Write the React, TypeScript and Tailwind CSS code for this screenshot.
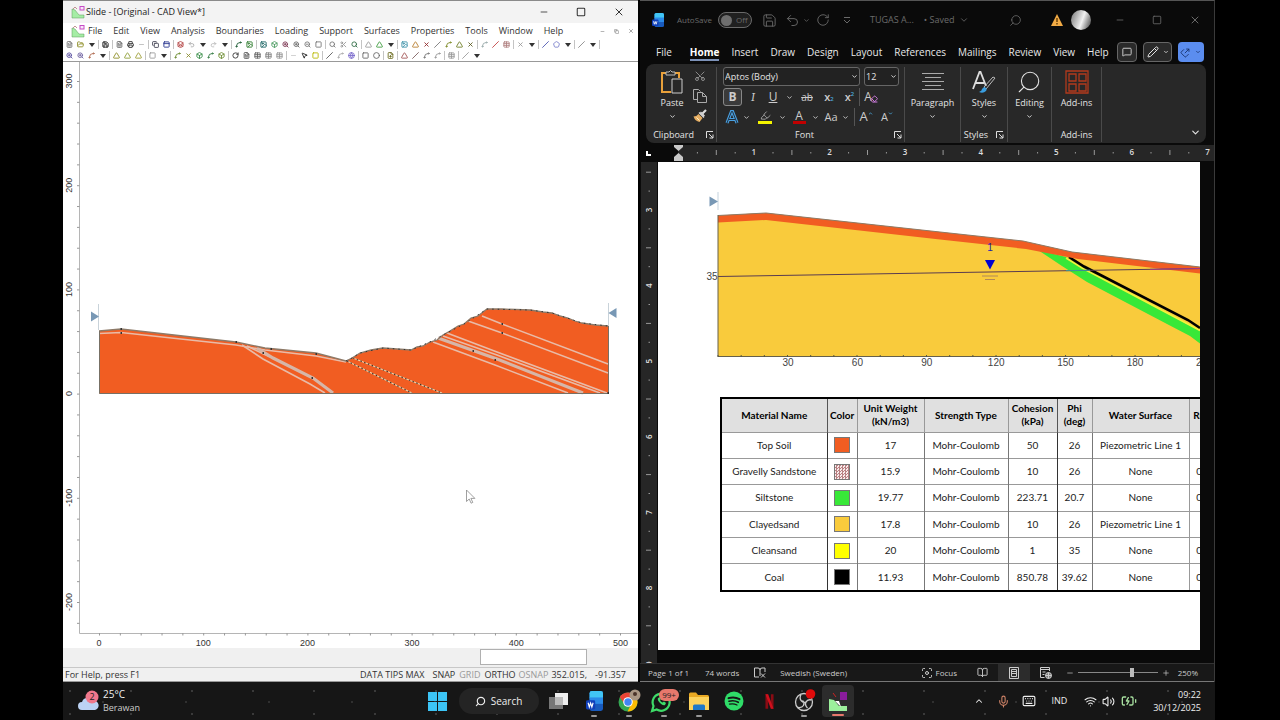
import type { ReactNode } from "react";
import {
  BatteryCharging,
  BookOpen,
  Box,
  ChevronDown,
  ChevronUp,
  Circle,
  Copy,
  Eraser,
  FilePlus,
  FileText,
  Focus,
  FolderOpen,
  Globe,
  Highlighter,
  Image as ImageIcon,
  Keyboard,
  Layers,
  MessageSquare,
  Mic,
  Minus,
  MousePointer2,
  PanelTop,
  Pencil,
  Pentagon,
  Plus,
  Printer,
  Redo2,
  RotateCw,
  Save,
  Scissors,
  Search,
  Share,
  Slash,
  Spline,
  Square,
  Table,
  Triangle,
  Undo2,
  Volume2,
  Wifi,
  X,
  ZoomIn,
  ZoomOut,
} from "lucide-react";

const slideMenu = [
  "File",
  "Edit",
  "View",
  "Analysis",
  "Boundaries",
  "Loading",
  "Support",
  "Surfaces",
  "Properties",
  "Tools",
  "Window",
  "Help",
];

const wordTabs = [
  "Home",
  "Insert",
  "Draw",
  "Design",
  "Layout",
  "References",
  "Mailings",
  "Review",
  "View",
  "Help",
];

// "|" is a separator, "v" a drop-down arrow
type ToolItem = "|" | "v" | [string, typeof Save, string];

const toolbarTop: ToolItem[] = [
  ["New", FileText, "#777"],
  ["Open", FolderOpen, "#8a8a20"],
  "v",
  "|",
  ["Save", Save, "#111"],
  "|",
  ["Preview", FileText, "#666"],
  ["Print", Printer, "#333"],
  ["Page", Minus, "#bbb"],
  "|",
  ["Copy", Copy, "#445"],
  ["Window", PanelTop, "#22308c"],
  "|",
  ["Layers", Layers, "#b03a3a"],
  ["Undo", Undo2, "#aaa"],
  "v",
  ["Redo", Redo2, "#bbb"],
  "v",
  "|",
  ["Filter", Spline, "#1d5c35"],
  ["Materials", ImageIcon, "#2b7a2b"],
  "|",
  ["Image", ImageIcon, "#15605f"],
  ["Region", Box, "#4a9a60"],
  ["Zoom all", ZoomIn, "#7a3450"],
  ["Zoom in", ZoomIn, "#666"],
  ["Zoom out", ZoomOut, "#777"],
  ["Zoom window", Square, "#777"],
  "|",
  ["Pan", Search, "#777"],
  ["Fit", Scissors, "#999"],
  ["Extent", Search, "#2f6b45"],
  "|",
  ["Slope", Triangle, "#999"],
  ["Ground", Triangle, "#3a9a3a"],
  "v",
  "|",
  ["Boundary", ImageIcon, "#3a90a8"],
  ["Edit boundary", Triangle, "#b57a2a"],
  ["Delete", X, "#912b2b"],
  ["Move", Slash, "#777"],
  ["Split", Spline, "#7f8c28"],
  ["Support", Triangle, "#6c7a20"],
  ["Remove support", X, "#5c5c20"],
  "|",
  ["Load", Spline, "#9aa"],
  ["Line load", Slash, "#c14040"],
  ["Tension", Table, "#b08080"],
  "|",
  ["Clear", X, "#999"],
  "v",
  "|",
  ["Line", Slash, "#4a55b0"],
  ["Shape", Pentagon, "#7a80cc"],
  "v",
  "|",
  ["Text", Slash, "#888"],
  "v",
  "|",
];

const toolbarBottom: ToolItem[] = [
  ["Grid", ZoomIn, "#5a50a0"],
  ["Snap", ZoomIn, "#6d60a0"],
  ["Surface", Spline, "#b06a50"],
  "v",
  "|",
  ["Slope limits", Triangle, "#8c8c20"],
  ["Slope points", Triangle, "#8c9c30"],
  ["Slope edit", Triangle, "#9a9c30"],
  "|",
  ["Properties", Square, "#999"],
  "v",
  "|",
  ["Add vertex", Spline, "#6c8c30"],
  ["Move vertex", X, "#8a8c30"],
  ["Water", Box, "#358c45"],
  ["Piezo", Spline, "#357c45"],
  ["Ponded", Box, "#6c8c30"],
  "|",
  ["Rotate", RotateCw, "#333"],
  ["Sheet", FileText, "#555"],
  ["Table", Table, "#666"],
  ["Columns", Table, "#888"],
  ["Rows", Table, "#999"],
  "|",
  ["Query", Minus, "#ccc"],
  ["Arrow", MousePointer2, "#222"],
  ["Highlight", Square, "#b8b800"],
  "|",
  ["Pen", Slash, "#555"],
  ["Arc", Spline, "#aaa"],
  ["Globe", Globe, "#7a6acc"],
  "|",
  ["Rectangle", Square, "#666"],
  ["Polygon", Circle, "#666"],
  "|",
  ["Add tool", FilePlus, "#6c6c20"],
  "|",
  ["Dimension", Triangle, "#a05050"],
  ["Parallel", Slash, "#7a5a5a"],
  ["Angle", Spline, "#777"],
  ["Curve", Spline, "#999"],
  "|",
  ["Axes", Table, "#999"],
  "|",
  ["Draw line", Slash, "#999"],
  "v",
];

const materials = [
  { name: "Top Soil", swatch: "bg-[#f15d22]", weight: "17", cohesion: "50", phi: "26", water: "Piezometric Line 1", ru: "" },
  {
    name: "Gravelly Sandstone",
    swatch: "bg-[#f6dfe0] bg-[repeating-conic-gradient(#b98083_0_25%,#f8ecec_0_50%)] bg-[length:3px_3px]",
    weight: "15.9",
    cohesion: "10",
    phi: "26",
    water: "None",
    ru: "0",
  },
  { name: "Siltstone", swatch: "bg-[#38e838]", weight: "19.77", cohesion: "223.71", phi: "20.7", water: "None", ru: "0" },
  { name: "Clayedsand", swatch: "bg-[#f9cb3c]", weight: "17.8", cohesion: "10", phi: "26", water: "Piezometric Line 1", ru: "" },
  { name: "Cleansand", swatch: "bg-[#ffff00]", weight: "20", cohesion: "1", phi: "35", water: "None", ru: "0" },
  { name: "Coal", swatch: "bg-black", weight: "11.93", cohesion: "850.78", phi: "39.62", water: "None", ru: "0" },
];

function Toolbar({ tools, label }: { tools: ToolItem[]; label: string }) {
  return (
    <div role="toolbar" aria-label={label} className="flex h-[11px] items-center overflow-hidden pl-px">
      {tools.map((tool, i) => {
        if (tool === "|") return <span key={i} className="mx-px h-[9px] w-px shrink-0 bg-[#c4c4c4]" />;
        if (tool === "v")
          return (
            <button key={i} aria-label="More" className="flex w-[11px] shrink-0 justify-center">
              <svg viewBox="0 0 6 4" className="h-1 w-1.5">
                <path d="M0 0h6L3 4z" fill="#333" />
              </svg>
            </button>
          );
        const [name, Icon, color] = tool;
        return (
          <button key={i} aria-label={name} className="flex w-[11px] shrink-0 justify-center">
            <Icon size={7} color={color} strokeWidth={3} />
          </button>
        );
      })}
    </div>
  );
}

function SlideLogo() {
  return (
    <svg viewBox="0 0 14 14" className="size-[14px] shrink-0">
      <path d="M1 4l3 1 4 5h5v3H1z" fill="#a5eda5" stroke="#5a9a5a" strokeWidth=".5" />
      <path d="M2 4l2-2 2 2" fill="none" stroke="#a66" strokeWidth=".7" />
      <rect x="9" y="1.500" width="4" height="3.500" fill="#fbe6fb" stroke="#c44bc4" />
    </svg>
  );
}

const verticalLabels = [300, 200, 100, 0, -100, -200];
const horizontalLabels = [0, 100, 200, 300, 400, 500];

function CadCanvas() {
  const ground =
    "99,331 121,329 236,342 265,348 316,353 346,361 352,358 360,353 371,350 383,348 411,350 417,347 423,346 430,342 437,340 443,335 450,331 458,326 464,324 471,318 478,316 483,312 487,309 502,309 530,310 543,312 552,313 560,316 568,318 575,321 582,323 595,325 608,326";
  return (
    <svg viewBox="63 62 575 586" className="block w-full bg-white" role="img" aria-label="Slope cross section">
      <path d="M79.500 62V633.500H638" fill="none" stroke="#b5b5b5" />
      {Array.from({ length: 27 }, (_, i) => (
        <path key={i} d={`M77 ${81.500 + i * 20.840}h2.500`} stroke="#999" />
      ))}
      {Array.from({ length: 26 }, (_, i) => (
        <path key={i} d={`M${99.500 + i * 20.840} 633v2.500`} stroke="#999" />
      ))}
      <g fill="#333" fontFamily="Liberation Sans, sans-serif" fontSize="9" textAnchor="middle">
        {verticalLabels.map((n, i) => (
          <text key={n} transform={`translate(72 ${81 + i * 104.200}) rotate(-90)`}>
            {n}
          </text>
        ))}
        {horizontalLabels.map((n, i) => (
          <text key={n} x={99 + i * 104.300} y="646">
            {n}
          </text>
        ))}
      </g>
      <path d="M98.500 304v26M608.500 303v23" stroke="#c9d3da" />
      <path d="M91 311.500l8 5-8 5zM616.500 308l-8 5 8 5z" fill="#7898b5" />
      <polygon points={`${ground} 608,393.500 99,393.500`} fill="#f15d22" />
      <g fill="none" stroke="#e8bba8" strokeWidth="1.600">
        <path d="M99 333.500L121 332.500L236 345L265 350L316 356L346 362" />
        <path d="M242 345L263 359L310 384L325 393" />
        <path d="M247 346L270 357" />
        <path d="M482 316L502 324L608 364" />
        <path d="M468 321L502 333L608 373" />
        <path d="M447 333L497 352L607 393" />
        <path d="M443 336L497 355L600 393" />
        <path d="M433 342L495 365L568 393" />
      </g>
      <g fill="none" stroke="#d6b6a8" strokeWidth="3.200">
        <path d="M257 348L273 358L313 378L333 393" />
        <path d="M438 338L497 359L583 393" />
      </g>
      <g fill="none" stroke="#e8d2ae" strokeWidth="1.200">
        <path d="M347 361L412 393M353 358L442 393" />
        <path d="M347 361L412 393M353 358L442 393" stroke="#4a3528" strokeDasharray="1.500 2.500" />
      </g>
      <polyline points={ground} fill="none" stroke="#8d7a68" strokeWidth="1.300" />
      <polyline
        points="346,361 352,358 360,353 383,348 411,350 430,342 443,335 464,324 487,309 530,310 552,313 582,323 608,326"
        fill="none"
        stroke="#333"
        strokeDasharray="1.500 4"
      />
      <path d="M99.500 331V393.500H608.500V326" fill="none" stroke="#777065" />
      <g fill="#333">
        {[
          [121, 329],
          [121, 333],
          [236, 342],
          [263, 353],
          [271, 349],
          [312, 378],
          [316, 354],
          [502, 324],
          [502, 333],
          [495, 360],
          [473, 351],
          [608, 393],
        ].map(([x, y]) => (
          <rect key={`${x}-${y}`} x={x - 0.500} y={y - 1} width="1.500" height="2" />
        ))}
      </g>
      <path d="M466.500 490v11.500l2.700-2.500 1.900 4.200 1.700-.8-1.900-4h4z" fill="#fff" stroke="#888" strokeWidth=".8" />
    </svg>
  );
}

function SlideWindow() {
  return (
    <section className="flex min-w-0 flex-col border-t border-[#8a8a8a] bg-white text-[#333]">
      <header className="flex h-[22px] items-center bg-[#f3f3f3] pl-2 pr-[13px]">
        <SlideLogo />
        <h1 className="flex-1 pl-px text-[9px] text-[#222]">Slide - [Original - CAD View*]</h1>
        <div className="flex items-center gap-[27px]">
          <button aria-label="Minimize Slide">
            <Minus size={10} strokeWidth={2} />
          </button>
          <button aria-label="Maximize Slide">
            <Square size={10} strokeWidth={2.500} />
          </button>
          <button aria-label="Close Slide">
            <X size={12} strokeWidth={2} />
          </button>
        </div>
      </header>
      <nav className="flex h-4 items-center gap-[11px] pl-2 pr-1 text-[9px]">
        <span className="-mr-2 flex">
          <SlideLogo />
        </span>
        {slideMenu.map((item) => (
          <button key={item}>{item}</button>
        ))}
        <div className="ml-auto flex gap-[9px] text-[#888]">
          <button aria-label="Minimize view">
            <Minus size={5} strokeWidth={3} />
          </button>
          <button aria-label="Restore view">
            <Copy size={5} strokeWidth={3} />
          </button>
          <button aria-label="Close view">
            <X size={6} strokeWidth={3} />
          </button>
        </div>
      </nav>
      <div className="border-b border-[#999]">
        <Toolbar tools={toolbarTop} label="Standard" />
        <Toolbar tools={toolbarBottom} label="Modelling" />
      </div>
      <CadCanvas />
      <div className="flex h-[19px] items-start justify-end bg-[#f0f0f0] pr-[51px] pt-px">
        <input aria-label="Command prompt" className="h-4 w-[107px] border border-[#b0b0b0] bg-white" />
      </div>
      <footer className="flex flex-1 items-center border-y border-b-[#999] border-t-[#c8c8c8] bg-[#f0f0f0] pl-0.5 pr-3 text-[9px] leading-3">
        <span className="flex-1">For Help, press F1</span>
        <span className="pr-2">DATA TIPS MAX</span>
        <span className="pr-1">SNAP</span>
        <span className="pr-1 text-[#999]">GRID</span>
        <span className="pr-[3px]">ORTHO</span>
        <span className="pr-[3px] text-[#999]">OSNAP</span>
        <span className="pr-2">352.015,</span>
        <span>-91.357</span>
      </footer>
    </section>
  );
}

function WordLogo({ className }: { className: string }) {
  return (
    <svg viewBox="0 0 24 28" className={className}>
      <rect x="5" y="0" width="19" height="28" rx="3" fill="#185abd" />
      <path d="M5 3a3 3 0 013-3h13a3 3 0 013 3v7H5z" fill="#41c5f5" />
      <path d="M5 9h19v9H5z" fill="#2b8ae8" />
      <rect x="0" y="13" width="13" height="13" rx="2" fill="#103fba" />
      <path d="M3 16.500l1.700 6 1.800-5.500 1.800 5.500 1.700-6" fill="none" stroke="#fff" strokeWidth="1.600" />
    </svg>
  );
}

function WordTitleBar() {
  return (
    <header className="flex h-[38px] items-center pl-3 pr-[13px] text-[9px] text-[#6a6a6a]">
      <WordLogo className="h-[14px] w-3" />
      <span className="ml-[13px] w-[41px] text-[8px]">AutoSave</span>
      <button
        role="switch"
        aria-checked="false"
        aria-label="AutoSave"
        className="flex h-4 w-[34px] items-center gap-1 rounded-full border border-[#6a6a6a] bg-[#202020] px-0.5 text-[8px]"
      >
        <span className="size-[11px] rounded-full bg-[#6e6e6e]" />
        Off
      </button>
      <button aria-label="Save" className="ml-[10px]">
        <Save size={15} strokeWidth={1.500} />
      </button>
      <button aria-label="Undo" className="ml-2">
        <Undo2 size={15} strokeWidth={1.500} />
      </button>
      <button aria-label="Undo list" className="ml-[3px]">
        <ChevronDown size={7} strokeWidth={2.500} />
      </button>
      <button aria-label="Repeat" className="ml-[6px]">
        <RotateCw size={14} strokeWidth={1.500} />
      </button>
      <button aria-label="Customize toolbar" className="ml-[13px]">
        <svg viewBox="0 0 8 8" className="size-2" fill="none" stroke="currentColor">
          <path d="M1 1.500h6M1 4l3 3 3-3" />
        </svg>
      </button>
      <span className="ml-[19px] whitespace-nowrap">TUGAS A...</span>
      <button className="ml-[10px] flex items-center gap-1 whitespace-nowrap">
        • Saved <ChevronDown size={10} strokeWidth={2} />
      </button>
      <button aria-label="Search" className="ml-auto mr-[29px]">
        <Search size={13} strokeWidth={1.500} className="-scale-x-100" />
      </button>
      <svg viewBox="0 0 12 12" className="size-3" role="img" aria-label="Warning">
        <path d="M6 0l6 12H0z" fill="#f2ab45" />
        <path d="M6 4v4M6 9v1.500" stroke="#553200" strokeWidth="1.300" />
      </svg>
      <button
        aria-label="Account"
        className="ml-2 size-5 rounded-full bg-[linear-gradient(110deg,#8b8b8b_10%,#d9d9d9_45%,#f2f2f2_55%,#777_85%)]"
      />
      <div className="ml-6 flex items-center gap-[27px]">
        <button aria-label="Minimize Word">
          <Minus size={10} strokeWidth={2} />
        </button>
        <button aria-label="Maximize Word">
          <Square size={10} strokeWidth={2} />
        </button>
        <button aria-label="Close Word">
          <X size={12} strokeWidth={2} />
        </button>
      </div>
    </header>
  );
}

function WordTabs() {
  return (
    <nav className="flex h-[25px] items-center pl-4 pr-[10px] text-[10px] leading-4 text-[#e8e8e8]">
      <button className="mr-[18px]">File</button>
      <div className="flex gap-3">
        {wordTabs.map((tab) => (
          <button key={tab} className={tab === "Home" ? "border-b-2 border-[#7d92b8] pt-0.5 font-bold leading-[14px] text-white" : ""}>
            {tab}
          </button>
        ))}
      </div>
      <div className="ml-auto flex gap-[6px]">
        <button aria-label="Comments" className="flex h-5 w-5 items-center justify-center rounded-[4px] border border-[#666] bg-[#2a2a2a]">
          <MessageSquare size={10} />
        </button>
        <button aria-label="Editing mode" className="flex h-5 w-[29px] items-center justify-center gap-1 rounded-[4px] border border-[#666] bg-[#2a2a2a]">
          <Pencil size={12} />
          <ChevronDown size={6} strokeWidth={3} />
        </button>
        <button aria-label="Share" className="flex h-5 w-[26px] items-center justify-center gap-1 rounded-[4px] bg-[#5b8def] text-[#173068]">
          <Share size={10} className="rotate-45" />
          <ChevronDown size={6} strokeWidth={3} />
        </button>
      </div>
    </nav>
  );
}

function Launcher({ label }: { label: string }) {
  return (
    <button aria-label={label}>
      <svg viewBox="0 0 8 8" className="size-2" fill="none" stroke="#ddd">
        <path d="M.5 7V.5H7M3 3l4 4M7 3.500V7H3.500" />
      </svg>
    </button>
  );
}

function Tool({ label, className, children }: { label: string; className: string; children: ReactNode }) {
  return (
    <button aria-label={label} className={`flex h-[18px] shrink-0 items-center justify-center ${className}`}>
      {children}
    </button>
  );
}

function BigTool({ label, arrow, children }: { label: string; arrow?: boolean; children: ReactNode }) {
  return (
    <button className="flex flex-col items-center">
      <span className="flex h-[29px] items-center">{children}</span>
      <span className="leading-[14px]">{label}</span>
      {arrow && <ChevronDown size={7} strokeWidth={3} className="mt-[3px]" />}
    </button>
  );
}

const tinyArrow = <ChevronDown size={7} strokeWidth={3} />;

function Ribbon() {
  return (
    <div className="ml-[6px] mr-2 flex h-[79px] rounded-lg bg-[#282828] pb-px pt-[3px] text-[9px] text-[#e4e4e4]">
      <div className="flex w-[71px] flex-col justify-between border-r border-[#4a4a4a]">
        <div className="flex">
          <div className="flex w-[46px] justify-center pl-[6px]">
            <BigTool label="Paste" arrow>
              <svg viewBox="0 0 24 26" className="h-[26px] w-6" fill="none">
                <path d="M6 4H2v19h9M15 4h4v5" stroke="#e9a13b" strokeWidth="2" />
                <path d="M6 6V3h3q1.500-3 3 0h3v3z" stroke="#bbb" />
                <path d="M12 10h10v14H12z" fill="#282828" stroke="#ccc" />
              </svg>
            </BigTool>
          </div>
          <div className="flex flex-col items-center">
            <Tool label="Cut" className="w-4">
              <Scissors size={12} strokeWidth={1.500} className="-rotate-90" color="#aaa" />
            </Tool>
            <Tool label="Copy" className="my-0.5 w-4">
              <svg viewBox="0 0 14 14" className="size-[14px]" fill="none" stroke="#aaa">
                <path d="M4.500 10.500h-4v-10h5l2 2M4.500 3.500h5l4 4v6h-9zM9.500 3.500v4h4" />
              </svg>
            </Tool>
            <Tool label="Format Painter" className="w-4">
              <svg viewBox="0 0 14 14" className="size-[14px]" fill="none">
                <path d="M13 1L9.500 4.500" stroke="#ddd" strokeWidth="2.200" />
                <path d="M6 3.500l5 5M7.500 3l4 4" stroke="#ddd" strokeWidth="1.200" />
                <path d="M5.500 5l4 4-3 4Q2 12 .5 7.500q3 0 5-2.500z" fill="#e6ae62" />
                <path d="M3.500 8.500l3 3" stroke="#fff0c8" />
              </svg>
            </Tool>
          </div>
        </div>
        <div className="flex items-center justify-end gap-3 pr-0.5 leading-[14px]">
          Clipboard <Launcher label="Clipboard options" />
        </div>
      </div>
      <div className="flex w-[188px] flex-col justify-between border-r border-[#4a4a4a] pl-[6px]">
        <div className="flex flex-col gap-[2px]">
          <div className="flex gap-1">
            <div className="relative w-[137px]">
              <select aria-label="Font" className="h-[19px] w-full appearance-none rounded-[3px] border border-[#666] bg-[#222] px-px">
                <option>Aptos (Body)</option>
              </select>
              <ChevronDown size={7} strokeWidth={3} className="pointer-events-none absolute right-0.5 top-[6px]" />
            </div>
            <div className="relative w-[35px]">
              <select aria-label="Font size" className="h-[19px] w-full appearance-none rounded-[3px] border border-[#666] bg-[#222] px-px">
                <option>12</option>
              </select>
              <ChevronDown size={7} strokeWidth={3} className="pointer-events-none absolute right-0.5 top-[6px]" />
            </div>
          </div>
          <div className="flex items-center text-[12px] text-[#ccc]">
            <Tool label="Bold" className="w-[19px] rounded-[3px] border border-[#888] bg-[#3a3a3a] font-bold">
              B
            </Tool>
            <Tool label="Italic" className="w-[22px] font-serif italic">
              I
            </Tool>
            <Tool label="Underline" className="w-[18px] underline">
              U
            </Tool>
            <Tool label="Underline style" className="w-[14px]">
              {tinyArrow}
            </Tool>
            <Tool label="Strikethrough" className="w-[22px] text-[10px] line-through">
              ab
            </Tool>
            <Tool label="Subscript" className="w-[22px] text-[11px] font-semibold">
              x<sub className="text-[6px] text-[#4aa8dc]">2</sub>
            </Tool>
            <Tool label="Superscript" className="w-[19px] text-[11px] font-semibold">
              x<sup className="text-[6px] text-[#4aa8dc]">2</sup>
            </Tool>
            <span className="h-[18px] w-px bg-[#555]" />
            <Tool label="Clear formatting" className="w-[22px]">
              A
              <Eraser size={8} strokeWidth={3} color="#c878d8" className="-ml-0.5 mt-1" />
            </Tool>
          </div>
          <div className="flex items-center text-[12px] text-[#ccc]">
            <Tool label="Text effects" className="w-[18px]">
              <svg viewBox="0 0 14 14" className="size-[14px]" fill="none">
                <path d="M2 13L6.500 1.500h1L12 13M4 9.500h6" stroke="#4aa0e0" strokeWidth="3.200" />
                <path d="M2 13L6.500 1.500h1L12 13M4 9.500h6" stroke="#1d2f40" />
              </svg>
            </Tool>
            <Tool label="Text effects list" className="w-[11px]">
              {tinyArrow}
            </Tool>
            <Tool label="Highlight" className="w-[26px] flex-col">
              <Highlighter size={11} strokeWidth={1.500} />
              <span className="h-[3px] w-[14px] bg-[#f4f400]" />
            </Tool>
            <Tool label="Highlight list" className="w-2">
              {tinyArrow}
            </Tool>
            <Tool label="Font color" className="w-[26px] flex-col">
              <span className="leading-[11px]">A</span>
              <span className="h-[3px] w-[13px] bg-[#c00000]" />
            </Tool>
            <Tool label="Font color list" className="w-[7px]">
              {tinyArrow}
            </Tool>
            <Tool label="Change case" className="w-[35px] gap-1 text-[11px]">
              Aa {tinyArrow}
            </Tool>
            <span className="h-[18px] w-px bg-[#555]" />
            <Tool label="Grow font" className="w-[22px] text-[13px]">
              A<ChevronUp size={5} strokeWidth={4} color="#4aa8dc" className="mb-2" />
            </Tool>
            <Tool label="Shrink font" className="w-[20px] text-[11px]">
              A<ChevronDown size={5} strokeWidth={4} color="#4aa8dc" className="mb-2" />
            </Tool>
          </div>
        </div>
        <div className="flex items-center justify-end pr-0.5 leading-[14px]">
          <span className="flex-1 pr-2 text-center">Font</span>
          <Launcher label="Font options" />
        </div>
      </div>
      <div className="flex w-[56px] justify-center border-r border-[#4a4a4a]">
        <BigTool label="Paragraph" arrow>
          <svg viewBox="0 0 24 20" className="h-5 w-6" stroke="#aaa">
            <path d="M1 1.500h22M4 5.500h16M1 9.500h22M4 13.500h16M1 17.500h22" />
          </svg>
        </BigTool>
      </div>
      <div className="flex w-[47px] flex-col justify-between border-r border-[#4a4a4a]">
        <BigTool label="Styles" arrow>
          <svg viewBox="0 0 26 26" className="size-[26px]" fill="none">
            <path d="M2 20L8.500 3h1L15 17M4 14h9" stroke="#ddd" strokeWidth="1.800" />
            <path d="M24 9l-9 11-2-2L22 8z" stroke="#bbb" />
            <path d="M13 18q4 1 2 4-3 3-7 1 3-1 3-3z" fill="#3a9ee0" />
          </svg>
        </BigTool>
        <div className="flex items-center justify-end gap-2 pr-[3px] leading-[14px]">
          Styles <Launcher label="Styles options" />
        </div>
      </div>
      <div className="flex w-[44px] justify-center border-r border-[#4a4a4a]">
        <BigTool label="Editing" arrow>
          <Search size={26} strokeWidth={1} className="-scale-x-100" />
        </BigTool>
      </div>
      <div className="flex w-[50px] flex-col items-center justify-between border-r border-[#4a4a4a]">
        <BigTool label="Add-ins">
          <svg viewBox="0 0 24 24" className="size-6" fill="none" stroke="#b23a1c" strokeWidth="1.300">
            <path d="M1 1h22v22H1zM4 4h7v7H4zM14 4h7v7h-7zM4 14h7v7H4zM14 14h7v7h-7z" />
          </svg>
        </BigTool>
        <span className="leading-[14px]">Add-ins</span>
      </div>
      <button aria-label="Collapse ribbon" className="ml-auto mr-[5px] self-end pb-1">
        <ChevronDown size={11} strokeWidth={2.500} />
      </button>
    </div>
  );
}

function TopRuler() {
  return (
    <div className="mt-[2px] flex h-[17px]">
      <div className="flex w-[18px] items-center pl-[6px]">
        <span className="size-[5px] border-b-2 border-l-2 border-white" />
      </div>
      <svg viewBox="658 145 556 17" className="block h-[17px] min-w-0 flex-1" preserveAspectRatio="xMinYMin slice">
        <rect x="678" y="145" width="900" height="16" fill="#262626" />
        {Array.from({ length: 28 }, (_, i) =>
          i % 4 === 3 ? (
            <text
              key={i}
              x={678.300 + (i + 1) * 18.900}
              y="155"
              fill="#ddd"
              fontSize="8"
              fontWeight="600"
              textAnchor="middle"
            >
              {(i + 1) / 4}
            </text>
          ) : (
            <path
              key={i}
              d={i % 4 === 1 ? `M${678.500 + (i + 1) * 18.900} 150v5` : `M${678.500 + (i + 1) * 18.900} 152v1.500`}
              stroke="#999"
            />
          ),
        )}
        <path d="M674 145h9v2l-4.500 4-4.500-4zM674 161v-4l4.500-4 4.500 4v4z" fill="#c8c8c8" />
      </svg>
    </div>
  );
}

function SideRuler() {
  return (
    <svg viewBox="641 162 16 501" className="mr-px block w-4 shrink-0 self-stretch bg-[#262626]" preserveAspectRatio="xMinYMin slice">
      {Array.from({ length: 27 }, (_, i) => {
        const y = 172.200 + i * 18.900;
        if (i % 4 === 2)
          return (
            <text key={i} transform={`translate(651.500 ${y}) rotate(-90)`} fill="#ddd" fontSize="8" fontWeight="600" textAnchor="middle">
              {(i + 10) / 4}
            </text>
          );
        return <path key={i} d={i % 4 === 0 ? `M646 ${y}h5` : `M648.500 ${y}h1.500`} stroke="#999" />;
      })}
    </svg>
  );
}

function SectionDrawing() {
  return (
    <svg viewBox="658 162 542 225" className="block w-full" role="img" aria-label="Layered slope section">
      <path d="M718 215.500L766 213L940 232L1023 241L1072 252L1200 267V357H718z" fill="#f9cb3c" />
      <path d="M1038 250L1066 257L1084 268L1200 331V343.500L1190 336L1167 324L1087 282L1062 266z" fill="#38e838" />
      <path d="M1066 258L1083 268.500L1200 330.500" fill="none" stroke="#f2f23a" strokeWidth="1.600" />
      <path d="M1069 257L1084 266.500L1188 320L1200 328" fill="none" stroke="#000" strokeWidth="2.600" />
      <path
        d="M718 215.500L766 213L940 232L1023 241L1072 252L1200 267V273.500L1078 259L1026 249L940 239.500L766 220L718 222.500z"
        fill="#f15d22"
      />
      <path d="M718 215.500L766 213L940 232L1023 241L1072 252L1200 267" fill="none" stroke="#8d7a68" />
      <path d="M718 276.500L1200 268.500" stroke="#5a3c50" />
      <path d="M1066 270.700L1090 270.200" stroke="#3a9a9a" />
      <path d="M1150 269.300L1200 268.500" stroke="#a0388c" />
      <path d="M718 215V356.500H1200" fill="none" stroke="#66604a" />
      {Array.from({ length: 21 }, (_, i) => (
        <path key={i} d={`M${718 + i * 23.170} 355v2`} stroke="#554" />
      ))}
      <path d="M718 192v18" stroke="#c5d3de" />
      <path d="M709.500 196.500l8.500 5-8.500 5z" fill="#7898b5" />
      <path d="M985 260h10l-5 9.500z" fill="#0000d0" />
      <path d="M982 276h16M985 279.500h10" stroke="#b08858" />
      <g fill="#444" fontFamily="Liberation Sans, sans-serif" fontSize="10" textAnchor="middle">
        <text x="712" y="280">
          35
        </text>
        {[30, 60, 90, 120, 150, 180, 210].map((n, i) => (
          <text key={n} x={788 + i * 69.400} y="366">
            {n}
          </text>
        ))}
        <text x="990" y="251" fill="#2020b0">
          1
        </text>
      </g>
    </svg>
  );
}

function MaterialTable() {
  return (
    <table className="h-[195px] w-[491px] table-fixed border-collapse border-2 border-black text-center font-[Lato,sans-serif] text-[10px] leading-[13px] text-[#222]">
      <thead className="bg-[#e0e0e0] text-black">
        <tr className="h-[34px]">
          <th className="w-[106px] border-r border-[#555]">Material Name</th>
          <th className="w-[30px] border-r border-[#999]">Color</th>
          <th className="w-[67px] border-r border-[#999]">
            Unit Weight
            <br />
            (kN/m3)
          </th>
          <th className="w-[84px] border-r border-[#999]">Strength Type</th>
          <th className="w-[49px] border-r border-[#555]">
            Cohesion
            <br />
            (kPa)
          </th>
          <th className="w-[35px] border-r border-[#999]">
            Phi
            <br />
            (deg)
          </th>
          <th className="w-[97px] border-r border-[#999]">Water Surface</th>
          <th>Ru</th>
        </tr>
      </thead>
      <tbody>
        {materials.map((m) => (
          <tr key={m.name} className="border-t border-[#999]">
            <td className="border-r border-[#333]">{m.name}</td>
            <td className="border-r border-[#777]">
              <span className={`mx-auto block size-4 border border-[#777] ${m.swatch}`} />
            </td>
            <td className="border-r border-[#777]">{m.weight}</td>
            <td className="border-r border-[#777]">Mohr-Coulomb</td>
            <td className="border-r border-[#333]">{m.cohesion}</td>
            <td className="border-r border-[#777]">{m.phi}</td>
            <td className="border-r border-[#999]">{m.water}</td>
            <td>{m.ru}</td>
          </tr>
        ))}
      </tbody>
    </table>
  );
}

function WordStatusBar() {
  return (
    <footer className="flex h-[19px] items-center border-y border-b-[#777] border-t-[#333] bg-[#181818] pl-2 pr-4 text-[8px] text-[#ccc]">
      <span className="mr-4 whitespace-nowrap">Page 1 of 1</span>
      <span className="mr-[15px] whitespace-nowrap">74 words</span>
      <button aria-label="Proofing" className="mr-[14px]">
        <svg viewBox="0 0 12 11" className="h-[11px] w-3" fill="none" stroke="currentColor">
          <path d="M5 10H.5V1H4q2 0 2 2v6M6 3q0-2 2-2h3v4M7 6.500l4 4M11 6.500l-4 4" />
        </svg>
      </button>
      <span className="whitespace-nowrap">Swedish (Sweden)</span>
      <button className="ml-auto flex items-center gap-[3px]">
        <Focus size={12} /> Focus
      </button>
      <div className="ml-[9px] flex h-full items-center">
        <button aria-label="Read mode" className="flex w-8 justify-center">
          <BookOpen size={11} />
        </button>
        <button aria-label="Print layout" className="flex h-full w-8 items-center justify-center bg-[#2c2c2c]">
          <svg viewBox="0 0 10 12" className="h-3 w-2.5" fill="none" stroke="currentColor">
            <path d="M.5.5h9v11h-9zM2.500 2.500h5v7h-5zM2.500 4.500h5M2.500 6.500h5" />
          </svg>
        </button>
        <button aria-label="Web layout" className="flex w-8 justify-center">
          <svg viewBox="0 0 12 12" className="size-3" fill="none" stroke="currentColor">
            <path d="M4.500 10.500h-4v-10h9V4M.5 2.500h9M2.500 5h3M2.500 7.500h2" />
            <circle cx="8.500" cy="8.500" r="3" fill="#777" />
            <path d="M5.500 8.500h6M8.500 5.500v6" />
          </svg>
        </button>
      </div>
      <button aria-label="Zoom out" className="ml-1 mr-1">
        <Minus size={8} />
      </button>
      <input
        type="range"
        aria-label="Zoom"
        defaultValue={68}
        className="h-[10px] w-20 appearance-none bg-[linear-gradient(#888,#888)] bg-[length:100%_1px] bg-center bg-no-repeat [&::-webkit-slider-thumb]:h-[9px] [&::-webkit-slider-thumb]:w-1 [&::-webkit-slider-thumb]:appearance-none [&::-webkit-slider-thumb]:bg-[#bbb]"
      />
      <button aria-label="Zoom in" className="mx-1">
        <Plus size={8} />
      </button>
      <span className="w-[24px] text-right">250%</span>
    </footer>
  );
}

function WordWindow() {
  return (
    <section className="flex min-w-0 flex-col border-r border-t border-r-[#3a3a3a] border-t-[#555] bg-[#0a0a0a]">
      <WordTitleBar />
      <WordTabs />
      <Ribbon />
      <TopRuler />
      <div className="flex flex-1 pl-px">
        <SideRuler />
        <main className="mb-[13px] mr-[14px] min-w-0 flex-1 overflow-hidden bg-white">
          <SectionDrawing />
          <div className="ml-[62px] mt-[10px]">
            <MaterialTable />
          </div>
        </main>
      </div>
      <WordStatusBar />
    </section>
  );
}

function TaskApp({ label, open, children }: { label: string; open?: boolean; children: ReactNode }) {
  return (
    <button aria-label={label} className="flex h-8 w-[35px] flex-col items-center justify-end gap-0.5">
      <span className="flex h-6 items-center">{children}</span>
      <span className={`h-0.5 w-1.5 rounded-full ${open ? "bg-[#999]" : ""}`} />
    </button>
  );
}

function Taskbar() {
  return (
    <footer className="flex h-[38px] items-center bg-[#161616] bg-[radial-gradient(circle_at_7px_9px,#3a3a3a_1px,transparent_1px),radial-gradient(circle_at_40px_20px,#303030_1px,transparent_1px)] bg-[length:61px_23px,83px_31px] pl-[14px] pr-[14px] text-[10px] text-[#eee]">
      <button className="flex flex-1 items-center gap-1 text-left">
        <svg viewBox="0 0 22 22" className="size-[22px]">
          <path d="M5 20a4 4 0 010-8 6 6 0 0111-1 4.500 4.500 0 012 9z" fill="#bcd2f4" />
          <circle cx="15" cy="7" r="6.500" fill="#f0788c" />
          <text x="15" y="10" textAnchor="middle" fontSize="9" fill="#222">
            2
          </text>
        </svg>
        <span className="leading-[13px]">
          25°C
          <br />
          <span className="text-[9px] text-[#ccc]">Berawan</span>
        </span>
      </button>
      <div className="flex items-center pl-[3px]">
        <button aria-label="Start" className="mr-3">
          <svg viewBox="0 0 19 19" className="size-[19px]" fill="#3cc4f5">
            <path d="M0 0h9v9H0zM10 0h9v9h-9zM0 10h9v9H0zM10 10h9v9h-9z" />
          </svg>
        </button>
        <button className="mr-[3px] flex h-[26px] w-20 items-center justify-center gap-[5px] rounded-full bg-[#242424]">
          <Search size={11} strokeWidth={2.500} className="-scale-x-100" /> Search
        </button>
        <TaskApp label="Task view">
          <svg viewBox="0 0 20 20" className="size-5">
            <path d="M0 6h14v12H0z" fill="#777" />
            <path d="M6 2h13v12H6z" fill="#eee" />
            <path d="M6 6h8v8H6z" fill="#bbb" />
          </svg>
        </TaskApp>
        <TaskApp label="Word" open>
          <WordLogo className="h-5 w-[17px]" />
        </TaskApp>
        <TaskApp label="Chrome" open>
          <svg viewBox="0 0 24 24" className="size-6">
            <circle cx="11" cy="13" r="9.500" fill="#34a853" />
            <path d="M2.800 8.300A9.500 9.500 0 0119.200 8.300L11 9z" fill="#ea4335" />
            <path d="M19.600 9A9.500 9.500 0 0110.500 22.500L15 13.500 12 9z" fill="#fbbc04" />
            <path d="M2.800 8.300L7.500 15 11 9 6 5z" fill="#ea4335" />
            <circle cx="11" cy="13" r="4.800" fill="#fff" />
            <circle cx="11" cy="13" r="3.700" fill="#4285f4" />
            <circle cx="18" cy="6" r="5.500" fill="#a99784" />
            <circle cx="18" cy="5" r="2" fill="#4a342a" />
          </svg>
        </TaskApp>
        <TaskApp label="WhatsApp" open>
          <svg viewBox="0 0 30 24" className="h-6 w-[30px]">
            <path d="M3 22l1.500-5a8.500 8.500 0 113.200 3.500z" fill="#161616" stroke="#3edb68" strokeWidth="2.200" />
            <path d="M9 9q-1 2 2 5t5 2l1-2-2-1.500-1.500 1q-2-1-2.500-2.500l1-1L11 8z" fill="#3edb68" />
            <rect x="10" y="0" width="20" height="12" rx="6" fill="#e8786c" />
            <text x="20" y="9" textAnchor="middle" fontSize="8" fill="#222">
              99+
            </text>
          </svg>
        </TaskApp>
        <TaskApp label="File Explorer" open>
          <svg viewBox="0 0 20 20" className="size-5">
            <path d="M0 3q0-1.500 1.500-1.500H7l2 2.500h9.500Q20 4 20 5.500V19H0z" fill="#e9a923" />
            <path d="M0 6h20v13H0z" fill="#fcd25c" />
            <path d="M4 19v-4q0-1.500 1.500-1.500h9q1.500 0 1.500 1.500v4z" fill="#1f78c8" />
          </svg>
        </TaskApp>
        <TaskApp label="Spotify">
          <svg viewBox="0 0 20 20" className="size-5" fill="none" stroke="#161616" strokeLinecap="round">
            <circle cx="10" cy="10" r="9.500" fill="#2fdc68" stroke="none" />
            <path d="M4.500 7.200q6-1.800 11 1" strokeWidth="1.900" />
            <path d="M5 10.300q5-1.400 9.300 1" strokeWidth="1.600" />
            <path d="M5.500 13.200q4-1.100 7.500.8" strokeWidth="1.300" />
          </svg>
        </TaskApp>
        <TaskApp label="Netflix">
          <svg viewBox="0 0 10 16" className="h-[15px] w-[9px]">
            <path d="M.5 0h3v16h-3zM6.500 0h3v16h-3z" fill="#8a0c14" />
            <path d="M.5 0h3l6 16h-3z" fill="#d0101c" />
          </svg>
        </TaskApp>
        <TaskApp label="OBS Studio" open>
          <svg viewBox="0 0 24 24" className="size-6" fill="none" stroke="#ccc" strokeWidth="1.300">
            <circle cx="12" cy="13" r="8.500" fill="#1c1c1c" />
            <path d="M9 5.500q-2 4 .5 6.500t5.500.5M19.500 11q-4-1-5.500 2t1.500 6M6 18.500q4 .5 5.500-2t-1-5" />
            <circle cx="18.500" cy="5" r="4.800" fill="#e00b0b" stroke="none" />
          </svg>
        </TaskApp>
        <button aria-label="Slide" className="flex h-8 w-8 flex-col items-center justify-end gap-0.5 rounded bg-[#2c2c2c]">
          <svg viewBox="0 0 20 22" className="h-[22px] w-5">
            <path d="M1 9l5 1 5 6h8v5H1z" fill="#9cf09c" />
            <path d="M7 11l6 6-2-6z" fill="#fff" />
            <path d="M5 3l3 4" stroke="#c22" />
            <rect x="12" y="2" width="7" height="8" fill="#8a1c9c" />
          </svg>
          <span className="mb-px h-0.5 w-3 rounded-full bg-[#e8786c]" />
        </button>
      </div>
      <div className="flex flex-1 items-center justify-end text-[9px]">
        <button aria-label="Show hidden icons">
          <ChevronUp size={10} strokeWidth={2.500} />
        </button>
        <Mic size={13} color="#d08468" className="ml-[13px]" />
        <Keyboard size={14} className="ml-3" />
        <span className="ml-[15px]">IND</span>
        <Wifi size={13} className="ml-[17px]" />
        <Volume2 size={13} className="ml-[5px]" />
        <BatteryCharging size={16} color="#a8e0a0" className="ml-[6px]" />
        <time className="ml-4 text-right leading-[13px]">
          09:22
          <br />
          30/12/2025
        </time>
      </div>
    </footer>
  );
}

export default function App() {
  return (
    <div className="flex min-h-screen flex-col bg-black pl-[63px] pr-[65px] font-['Open_Sans',sans-serif]">
      <div className="grid flex-1 grid-cols-2 gap-0.5">
        <SlideWindow />
        <WordWindow />
      </div>
      <Taskbar />
    </div>
  );
}
